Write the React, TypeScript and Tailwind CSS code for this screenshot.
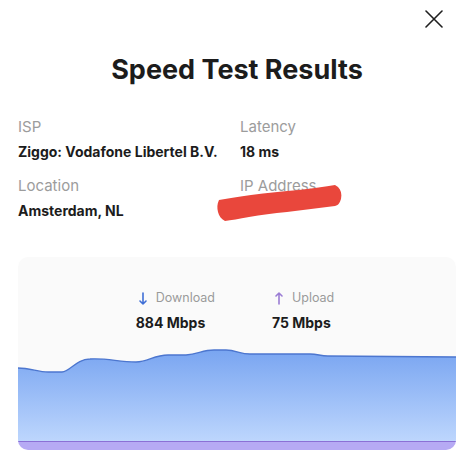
const font = { fontFamily: "Inter, 'Noto Sans', sans-serif" };

function CloseIcon() {
  return (
    <svg width="18" height="18" viewBox="0 0 18 18" fill="none" stroke="#1f1f1f" strokeWidth="1.6" strokeLinecap="round">
      <path d="M1 1 L17 17 M17 1 L1 17" />
    </svg>
  );
}

function Arrow({ up, color }: { up?: boolean; color: string }) {
  return (
    <svg width="8" height="13" viewBox="0 0 8 13" fill="none" stroke={color} strokeWidth="1.6" strokeLinecap="round" strokeLinejoin="round">
      {up ? <path d="M4 12 V1 M1 4 L4 1 L7 4" /> : <path d="M4 1 V12 M1 9 L4 12 L7 9" />}
    </svg>
  );
}

function Field({ label, value }: { label: string; value?: string }) {
  return (
    <div className="flex flex-col gap-[5px]">
      <span className="text-[15px] leading-5 text-[#9c9c9c]">{label}</span>
      <span className="text-[14px] leading-5 font-bold text-[#1c1c1c] h-5">{value}</span>
    </div>
  );
}

function Stat({ label, value, up, color }: { label: string; value: string; up?: boolean; color: string }) {
  return (
    <div className="flex flex-col gap-[5px]">
      <div className="flex items-center gap-[9px] pl-[3px] h-5">
        <Arrow up={up} color={color} />
        <span className="text-[12.5px] text-[#9a9a9a]">{label}</span>
      </div>
      <span className="text-[14px] leading-5 font-bold text-[#1c1c1c]">{value}</span>
    </div>
  );
}

function Chart() {
  const wave =
    "M0,27 C12,27 20,31 30,31 L44,31 C52,31 58,18 72,18 C90,17 100,21 118,21 C130,21 136,14 150,14 L168,14 C180,13 185,9 196,9 L208,9 C218,9 222,13 232,13 L292,13 C300,13 302,15 310,15 L438,16";
  return (
    <svg width="438" height="109" viewBox="0 0 438 109" className="block">
      <defs>
        <linearGradient id="fillGrad" x1="0" y1="0" x2="0" y2="1">
          <stop offset="0" stopColor="#79a5f1" />
          <stop offset="1" stopColor="#bdd6fd" />
        </linearGradient>
      </defs>
      <path d={`${wave} L438,100 L0,100 Z`} fill="url(#fillGrad)" />
      <path d={wave} fill="none" stroke="#4c76cf" strokeWidth="1.3" />
      <rect x="0" y="100" width="438" height="9" fill="#b6aaf4" />
      <line x1="0" y1="100.5" x2="438" y2="100.5" stroke="#8b70d6" strokeWidth="1.2" />
    </svg>
  );
}

export default function App() {
  return (
    <div className="relative w-[474px] h-[467px] bg-white overflow-hidden" style={font}>
      <button className="absolute left-[425px] top-[10px]">
        <CloseIcon />
      </button>

      <h1 className="pt-[52px] text-center text-[27px] leading-9 font-bold text-[#1c1c1c]">
        Speed Test Results
      </h1>

      <div className="mt-[29px] px-[18px] grid grid-cols-[222px_1fr] gap-y-[14px]">
        <Field label="ISP" value="Ziggo: Vodafone Libertel B.V." />
        <Field label="Latency" value="18 ms" />
        <Field label="Location" value="Amsterdam, NL" />
        <div className="relative">
          <Field label="IP Address" />
          <svg className="absolute left-[-23px] top-[6px]" width="126" height="42" viewBox="0 0 126 42">
            <path
              d="M2,18 C12,16 22,15 34,13 C50,11 66,9 82,8 C96,6 108,5 118,3 L121,5 C124,8 125,12 124,17 C123,20 122,23 118,24 C102,26 86,28 70,30 C56,31 44,33 32,35 C22,37 14,38 8,39 C4,37 2,34 1,30 C0,26 0,22 2,18 Z"
              fill="#e9473c"
            />
          </svg>
        </div>
      </div>

      <div className="mx-[18px] mt-[36px] h-[193px] rounded-[10px] bg-[#fafafa] overflow-hidden flex flex-col">
        <div className="pt-[31px] flex justify-center gap-[57px] pr-[4px]">
          <Stat label="Download" value="884 Mbps" color="#3f6fd6" />
          <Stat label="Upload" value="75 Mbps" up color="#9a7cd4" />
        </div>
        <div className="mt-auto">
          <Chart />
        </div>
      </div>
    </div>
  );
}
